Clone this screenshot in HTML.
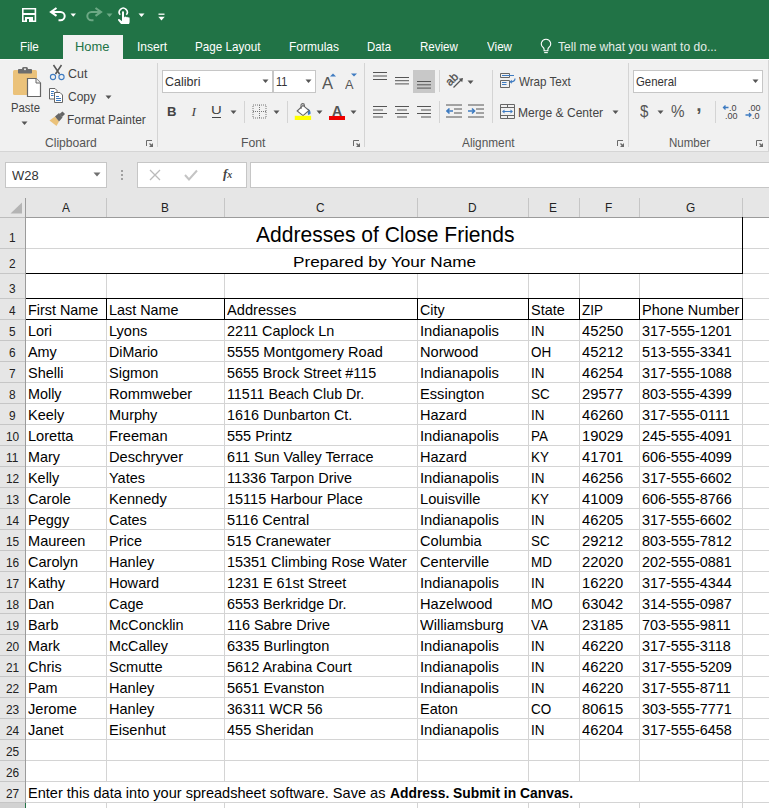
<!DOCTYPE html>
<html><head><meta charset="utf-8"><style>
html,body{margin:0;padding:0;}
body{width:769px;height:808px;overflow:hidden;position:relative;background:#fff;font-family:"Liberation Sans",sans-serif;}
.r{position:absolute;display:block;}
.t{position:absolute;white-space:nowrap;transform-origin:0 0;}
</style></head><body>
<div class="r" style="left:0px;top:0px;width:769px;height:59px;background:#217346;"></div>
<svg class="r" style="left:22px;top:8px" width="15" height="14" viewBox="0 0 15 14"><path d="M0.8 0.8h12.6v12.6h-12.6z" fill="none" stroke="#fff" stroke-width="1.6"/><rect x="0" y="5" width="14" height="2" fill="#fff"/><rect x="3" y="9" width="8" height="5" fill="#fff"/><rect x="5" y="11" width="2" height="3" fill="#217346"/></svg>
<svg class="r" style="left:46px;top:4px" width="64" height="22" viewBox="0 0 64 22"><path d="M10.5 4 L5 7.9 L10.5 11.8" fill="none" stroke="#fff" stroke-width="2.1"/><path d="M5.5 7.9 H14.5 A4.2 4.2 0 0 1 14.5 16.3 H12.5" fill="none" stroke="#fff" stroke-width="2"/><path d="M49.5 4 L55 7.9 L49.5 11.8" fill="none" stroke="#6da985" stroke-width="2.1"/><path d="M54.5 7.9 H45.5 A4.2 4.2 0 0 0 45.5 16.3 H47.5" fill="none" stroke="#6da985" stroke-width="2"/></svg>
<svg class="r" style="left:70px;top:13px" width="7" height="5" viewBox="0 0 7 5"><path d="M0.5 0.5h5.5l-2.75 3.2z" fill="#fff"/></svg>
<svg class="r" style="left:106px;top:13px" width="7" height="5" viewBox="0 0 7 5"><path d="M0.5 0.5h6l-3 3.5z" fill="#6da985"/></svg>
<svg class="r" style="left:116px;top:6px" width="15" height="18" viewBox="0 0 15 18"><path d="M4.2 8.8A4 4 0 1 1 10.3 8.8" fill="none" stroke="#fff" stroke-width="1.6"/><path d="M6 6.2c0-1.2 2-1.2 2 0v5.3l.3-.2c0-1 1.8-1 1.8 0v.3c0-1 1.8-1 1.8 0v.4c0-.9 1.7-.9 1.7 .2v3.5c0 1.4-.6 2.3-1.2 3.3h-6.6l-3.6-4.6c-.7-.9.4-1.9 1.3-1.2l2.5 2z" fill="#fff"/></svg>
<svg class="r" style="left:137.5px;top:13px" width="7" height="5" viewBox="0 0 7 5"><path d="M0.5 0.5h6l-3 3.5z" fill="#fff"/></svg>
<svg class="r" style="left:158px;top:13px" width="7" height="9" viewBox="0 0 7 9"><path d="M0.5 1.2h6" stroke="#fff" stroke-width="1.3"/><path d="M0.3 3.8h6.4l-3.2 3.6z" fill="#fff"/></svg>
<div class="r" style="left:63px;top:35px;width:60px;height:24px;background:#f1f1f1;"></div>
<div class="t" style="left:19.66px;top:39px;font-size:12.79px;line-height:15px;color:#fff;transform:scaleX(0.9161);">File</div>
<div class="t" style="left:75.27px;top:39px;font-size:12.79px;line-height:15px;color:#217346;transform:scaleX(1.0096);">Home</div>
<div class="t" style="left:136.91px;top:39px;font-size:12.79px;line-height:15px;color:#fff;transform:scaleX(0.9427);">Insert</div>
<div class="t" style="left:195.37px;top:39px;font-size:12.79px;line-height:15px;color:#fff;transform:scaleX(0.9119);">Page Layout</div>
<div class="t" style="left:289.34px;top:39px;font-size:12.79px;line-height:15px;color:#fff;transform:scaleX(0.9390);">Formulas</div>
<div class="t" style="left:367.39px;top:39px;font-size:12.79px;line-height:15px;color:#fff;transform:scaleX(0.8935);">Data</div>
<div class="t" style="left:420.07px;top:39px;font-size:12.79px;line-height:15px;color:#fff;transform:scaleX(0.9040);">Review</div>
<div class="t" style="left:486.94px;top:39px;font-size:12.79px;line-height:15px;color:#fff;transform:scaleX(0.9112);">View</div>
<svg class="r" style="left:540px;top:38px" width="12" height="17" viewBox="0 0 12 17"><path d="M6 1.2a4.6 4.6 0 0 0-2.8 8.3c.6.5.9 1.2.9 2v1.2h3.8v-1.2c0-.8.3-1.5.9-2A4.6 4.6 0 0 0 6 1.2z" fill="none" stroke="#fff" stroke-width="1.1"/><path d="M4.2 14.6h3.6" stroke="#fff" stroke-width="1.1"/></svg>
<div class="t" style="left:558.06px;top:39px;font-size:12.79px;line-height:15px;color:#e4ede8;transform:scaleX(0.9440);">Tell me what you want to do...</div>
<div class="r" style="left:0px;top:59px;width:769px;height:93px;background:#f1f1f1;"></div>
<div class="r" style="left:0px;top:59px;width:63px;height:1px;background:#fafafa;"></div>
<div class="r" style="left:123px;top:59px;width:646px;height:1px;background:#fafafa;"></div>
<div class="r" style="left:0px;top:151px;width:769px;height:1px;background:#d5d5d5;"></div>
<div class="r" style="left:768px;top:60px;width:1px;height:91px;background:#d5d5d5;"></div>
<div class="r" style="left:0px;top:152px;width:769px;height:46px;background:#e6e6e6;"></div>
<!--RIBBON-->
<div class="r" style="left:157px;top:63px;width:1px;height:84px;background:#d4d4d4;"></div>
<div class="r" style="left:364px;top:63px;width:1px;height:84px;background:#d4d4d4;"></div>
<div class="r" style="left:628px;top:63px;width:1px;height:84px;background:#d4d4d4;"></div>
<div class="t" style="left:44.89px;top:136px;font-size:12.06px;line-height:14px;color:#555;transform:scaleX(1.0050);">Clipboard</div>
<div class="t" style="left:240.52px;top:136px;font-size:12.06px;line-height:14px;color:#555;transform:scaleX(1.0172);">Font</div>
<div class="t" style="left:462.00px;top:136px;font-size:12.06px;line-height:14px;color:#555;transform:scaleX(0.9801);">Alignment</div>
<div class="t" style="left:669.08px;top:136px;font-size:12.06px;line-height:14px;color:#555;transform:scaleX(0.9583);">Number</div>
<svg class="r" style="left:146px;top:140px" width="8" height="7" viewBox="0 0 8 7"><path d="M0.5 6V0.5H6" fill="none" stroke="#6a6a6a" stroke-width="1"/><path d="M3.5 3.5l2 2" stroke="#6a6a6a" stroke-width="1.2"/><path d="M7 3V7H3z" fill="#6a6a6a"/></svg>
<svg class="r" style="left:353px;top:140px" width="8" height="7" viewBox="0 0 8 7"><path d="M0.5 6V0.5H6" fill="none" stroke="#6a6a6a" stroke-width="1"/><path d="M3.5 3.5l2 2" stroke="#6a6a6a" stroke-width="1.2"/><path d="M7 3V7H3z" fill="#6a6a6a"/></svg>
<svg class="r" style="left:617px;top:140px" width="8" height="7" viewBox="0 0 8 7"><path d="M0.5 6V0.5H6" fill="none" stroke="#6a6a6a" stroke-width="1"/><path d="M3.5 3.5l2 2" stroke="#6a6a6a" stroke-width="1.2"/><path d="M7 3V7H3z" fill="#6a6a6a"/></svg>
<svg class="r" style="left:756px;top:140px" width="8" height="7" viewBox="0 0 8 7"><path d="M0.5 6V0.5H6" fill="none" stroke="#6a6a6a" stroke-width="1"/><path d="M3.5 3.5l2 2" stroke="#6a6a6a" stroke-width="1.2"/><path d="M7 3V7H3z" fill="#6a6a6a"/></svg>
<svg class="r" style="left:12px;top:66px" width="30" height="32" viewBox="0 0 30 32"><rect x="1" y="4" width="24" height="25" rx="1.5" fill="#ebc27a"/><rect x="6" y="3" width="14" height="4.5" rx="0.8" fill="#6d6d6d"/><rect x="10" y="1" width="6" height="4" rx="1.5" fill="#6d6d6d"/><circle cx="13" cy="3.2" r="1" fill="#f1f1f1"/><path d="M15.5 12.5h8.5l4.5 4.5v13.5h-13z" fill="#fff" stroke="#666" stroke-width="1.2"/><path d="M24 12.5v4.5h4.5" fill="#f1f1f1" stroke="#666" stroke-width="1"/></svg>
<div class="t" style="left:10.59px;top:100px;font-size:12.79px;line-height:15px;color:#444;transform:scaleX(0.8848);">Paste</div>
<svg class="r" style="left:21px;top:121px" width="7" height="5" viewBox="0 0 7 5"><path d="M0.5 0.5h6l-3 3.5z" fill="#555"/></svg>
<svg class="r" style="left:49px;top:64px" width="17" height="17" viewBox="0 0 17 17"><path d="M4.5 1 L10.5 10 M12.5 1 L6.5 10" stroke="#555" stroke-width="1.5"/><circle cx="4" cy="13" r="2.6" fill="none" stroke="#3e7bc1" stroke-width="1.1"/><circle cx="12.5" cy="13" r="2.6" fill="none" stroke="#3e7bc1" stroke-width="1.1"/></svg>
<div class="t" style="left:67.68px;top:66px;font-size:12.79px;line-height:15px;color:#444;transform:scaleX(0.9747);">Cut</div>
<svg class="r" style="left:48px;top:88px" width="17" height="15" viewBox="0 0 17 15"><path d="M1.5 0.5h5.5l2 2v8.5h-7.5z" fill="#fff" stroke="#666" stroke-width="1"/><path d="M6.5 4.5h5.5l2.5 2.5v7.5h-8z" fill="#fff" stroke="#666" stroke-width="1"/><path d="M3 3.5h3M3 5.5h2.5M3 7.5h2.5M8 8.5h3M8 10.5h5M8 12.5h5" stroke="#3e7bc1" stroke-width="1"/></svg>
<div class="t" style="left:67.70px;top:89px;font-size:12.79px;line-height:15px;color:#444;transform:scaleX(0.9409);">Copy</div>
<svg class="r" style="left:105px;top:95px" width="7" height="5" viewBox="0 0 7 5"><path d="M0.5 0.5h6l-3 3.5z" fill="#555"/></svg>
<svg class="r" style="left:49px;top:111px" width="17" height="16" viewBox="0 0 17 16"><path d="M0.5 9.5 L6 5.5 L10 10.5 L7.5 15z" fill="#ebc27a"/><path d="M6 5.5 L10 2 L13.5 6.5 L10 10.5z" fill="#666"/><path d="M10.5 3 L13.5 0.5 L16 3 L13 6z" fill="#666"/></svg>
<div class="t" style="left:67.35px;top:112px;font-size:12.79px;line-height:15px;color:#444;transform:scaleX(0.9324);">Format Painter</div>
<div class="r" style="left:162px;top:70px;width:111px;height:23px;background:#fff;border:1px solid #c6c6c6;box-sizing:border-box;"></div>
<div class="r" style="left:273px;top:70px;width:43px;height:23px;background:#fff;border:1px solid #c6c6c6;box-sizing:border-box;"></div>
<div class="t" style="left:164.87px;top:74px;font-size:12.79px;line-height:15px;color:#333;transform:scaleX(0.9791);">Calibri</div>
<svg class="r" style="left:262px;top:79px" width="7" height="5" viewBox="0 0 7 5"><path d="M0.5 0.5h6l-3 3.5z" fill="#555"/></svg>
<div class="t" style="left:276.18px;top:74px;font-size:12.79px;line-height:15px;color:#333;transform:scaleX(0.8544);">11</div>
<svg class="r" style="left:305px;top:79px" width="7" height="5" viewBox="0 0 7 5"><path d="M0.5 0.5h6l-3 3.5z" fill="#555"/></svg>
<div class="t" style="left:322.00px;top:75px;font-size:15.99px;line-height:17px;color:#555;transform:scaleX(1.0346);">A</div>
<svg class="r" style="left:330px;top:73px" width="6" height="4" viewBox="0 0 6 4"><path d="M0 3.5l3-3 3 3z" fill="#3e7bc1"/></svg>
<div class="t" style="left:345.00px;top:78px;font-size:12.35px;line-height:14px;color:#555;transform:scaleX(1.0346);">A</div>
<svg class="r" style="left:351px;top:73px" width="6" height="4" viewBox="0 0 6 4"><path d="M0 0.5l3 3 3-3z" fill="#3e7bc1"/></svg>
<div class="t" style="left:167.15px;top:105px;font-size:12.35px;line-height:14px;color:#444;font-weight:bold;transform:scaleX(1.0615);">B</div>
<div class="t" style="left:191.5px;top:104px;font-family:'Liberation Serif',serif;font-style:italic;font-size:13.5px;line-height:15px;color:#444">I</div>
<div class="t" style="left:211.38px;top:103px;font-size:11.63px;line-height:13px;color:#444;transform:scaleX(1.2825);">U</div>
<div class="r" style="left:212px;top:117px;width:9px;height:1px;background:#444;"></div>
<svg class="r" style="left:230px;top:110px" width="7" height="5" viewBox="0 0 7 5"><path d="M0.5 0.5h6l-3 3.5z" fill="#555"/></svg>
<div class="r" style="left:244px;top:101px;width:1px;height:22px;background:#d4d4d4;"></div>
<svg class="r" style="left:252px;top:104px" width="15" height="15" viewBox="0 0 15 15"><path d="M1 1h13v13h-13z M7.5 1v13 M1 7.5h13" fill="none" stroke="#777" stroke-width="1" stroke-dasharray="1 1"/></svg>
<svg class="r" style="left:273px;top:110px" width="7" height="5" viewBox="0 0 7 5"><path d="M0.5 0.5h6l-3 3.5z" fill="#555"/></svg>
<div class="r" style="left:287px;top:101px;width:1px;height:22px;background:#d4d4d4;"></div>
<svg class="r" style="left:294px;top:101px" width="18" height="20" viewBox="0 0 18 20"><path d="M13.5 7.5c2 .8 3.5 2.8 3 5.5l-2.5 1z" fill="#3e7bc1"/><path d="M3.2 10 L9 4.4 L15 9.5 L9 14.6z" fill="#fff" stroke="#666" stroke-width="1.1"/><path d="M7 8V4.3a1.7 1.7 0 0 1 3.4 0V6" fill="none" stroke="#666" stroke-width="1.1"/><rect x="0.8" y="14.8" width="16.3" height="4.2" fill="#ffff00"/></svg>
<svg class="r" style="left:316px;top:110px" width="7" height="5" viewBox="0 0 7 5"><path d="M0.5 0.5h6l-3 3.5z" fill="#555"/></svg>
<div class="t" style="left:332.15px;top:103px;font-size:14.53px;line-height:16px;color:#555;font-weight:bold;transform:scaleX(0.9755);">A</div>
<div class="r" style="left:329px;top:116px;width:16px;height:4px;background:#e00;"></div>
<svg class="r" style="left:350px;top:110px" width="7" height="5" viewBox="0 0 7 5"><path d="M0.5 0.5h6l-3 3.5z" fill="#555"/></svg>
<svg class="r" style="left:373px;top:72px" width="16" height="11.5" viewBox="0 0 16 11.5"><rect x="0" y="0.0" width="14" height="1" fill="#555"/><rect x="0" y="3.5" width="14" height="1" fill="#555"/><rect x="0" y="7.0" width="14" height="1" fill="#555"/></svg>
<svg class="r" style="left:395px;top:77px" width="16" height="10.600000000000001" viewBox="0 0 16 10.600000000000001"><rect x="0" y="0.0" width="14" height="1" fill="#555"/><rect x="0" y="3.2" width="14" height="1" fill="#555"/><rect x="0" y="6.4" width="14" height="1" fill="#555"/></svg>
<div class="r" style="left:413px;top:70px;width:22px;height:23px;background:#c8c8c8;"></div>
<svg class="r" style="left:417px;top:81px" width="16" height="10.899999999999999" viewBox="0 0 16 10.899999999999999"><rect x="0" y="0.0" width="14" height="1" fill="#555"/><rect x="0" y="3.3" width="14" height="1" fill="#555"/><rect x="0" y="6.6" width="14" height="1" fill="#555"/></svg>
<svg class="r" style="left:444px;top:71px" width="22" height="20" viewBox="0 0 22 20"><text x="0" y="0" transform="translate(6,15.6) rotate(-45)" font-family="Liberation Sans" font-size="11.5" fill="#4a4a4a" stroke="#4a4a4a" stroke-width="0.3">ab</text><path d="M9.5 16.5 L17 9" stroke="#555" stroke-width="1.2"/><path d="M19 7 L14.8 7.8 L18.2 11.2z" fill="#555"/></svg>
<svg class="r" style="left:467px;top:80px" width="7" height="5" viewBox="0 0 7 5"><path d="M0.5 0.5h6l-3 3.5z" fill="#555"/></svg>
<div class="r" style="left:439px;top:70px;width:1px;height:22px;background:#d4d4d4;"></div>
<div class="r" style="left:439px;top:101px;width:1px;height:22px;background:#d4d4d4;"></div>
<svg class="r" style="left:373px;top:106px" width="16" height="15.0" viewBox="0 0 16 15.0"><rect x="0" y="0.0" width="14" height="1" fill="#555"/><rect x="0" y="3.5" width="10" height="1" fill="#555"/><rect x="0" y="7.0" width="14" height="1" fill="#555"/><rect x="0" y="10.5" width="10" height="1" fill="#555"/></svg>
<svg class="r" style="left:395px;top:106px" width="16" height="15.0" viewBox="0 0 16 15.0"><rect x="0" y="0.0" width="14" height="1" fill="#555"/><rect x="2" y="3.5" width="10" height="1" fill="#555"/><rect x="0" y="7.0" width="14" height="1" fill="#555"/><rect x="2" y="10.5" width="10" height="1" fill="#555"/></svg>
<svg class="r" style="left:417px;top:106px" width="16" height="15.0" viewBox="0 0 16 15.0"><rect x="0" y="0.0" width="14" height="1" fill="#555"/><rect x="4" y="3.5" width="10" height="1" fill="#555"/><rect x="0" y="7.0" width="14" height="1" fill="#555"/><rect x="4" y="10.5" width="10" height="1" fill="#555"/></svg>
<svg class="r" style="left:446px;top:104px" width="18" height="15" viewBox="0 0 18 15"><path d="M0 1h16M8 5h8M8 9h8M0 13h16" stroke="#555" stroke-width="1"/><path d="M1 7h6M3.5 4.5l-2.5 2.5 2.5 2.5" fill="none" stroke="#3e7bc1" stroke-width="1.6"/></svg>
<svg class="r" style="left:468px;top:104px" width="18" height="15" viewBox="0 0 18 15"><path d="M0 1h16M8 5h8M8 9h8M0 13h16" stroke="#555" stroke-width="1"/><path d="M0 7h6M4 4.5l2.5 2.5-2.5 2.5" fill="none" stroke="#3e7bc1" stroke-width="1.6"/></svg>
<div class="r" style="left:492px;top:70px;width:1px;height:53px;background:#d4d4d4;"></div>
<svg class="r" style="left:499px;top:72px" width="18" height="17" viewBox="0 0 18 17"><path d="M1.5 1.5h9v4h-9z M1.5 8.5h9v7h-9z" fill="none" stroke="#666" stroke-width="1"/><path d="M3 3.5h12 M3 10.5h4.5 M3 12.5h4.5" stroke="#3e7bc1" stroke-width="1"/><path d="M16 6.5c0 2-1.5 3.3-4.5 3.3" fill="none" stroke="#3e7bc1" stroke-width="1.2"/><path d="M10.5 9.8l2.3-2v4z" fill="#3e7bc1"/></svg>
<div class="t" style="left:519.24px;top:74px;font-size:12.79px;line-height:15px;color:#444;transform:scaleX(0.9083);">Wrap Text</div>
<svg class="r" style="left:499px;top:104px" width="17" height="16" viewBox="0 0 17 16"><path d="M1.5 0.5h14v14h-14z M1.5 3.5h14 M1.5 11.5h14 M8.5 0.5v3 M8.5 11.5v3" fill="none" stroke="#666" stroke-width="1"/><path d="M4.5 7.5h8" stroke="#3e7bc1" stroke-width="1"/><path d="M3 7.5l2.5-2v4z M14 7.5l-2.5-2v4z" fill="#3e7bc1"/></svg>
<div class="t" style="left:518.33px;top:105px;font-size:12.79px;line-height:15px;color:#444;transform:scaleX(0.9436);">Merge &amp; Center</div>
<svg class="r" style="left:612px;top:110px" width="7" height="5" viewBox="0 0 7 5"><path d="M0.5 0.5h6l-3 3.5z" fill="#555"/></svg>
<div class="r" style="left:633px;top:70px;width:130px;height:23px;background:#fff;border:1px solid #c6c6c6;box-sizing:border-box;"></div>
<div class="t" style="left:635.73px;top:74px;font-size:12.79px;line-height:15px;color:#333;transform:scaleX(0.8909);">General</div>
<svg class="r" style="left:752px;top:79px" width="7" height="5" viewBox="0 0 7 5"><path d="M0.5 0.5h6l-3 3.5z" fill="#555"/></svg>
<div class="t" style="left:640.35px;top:103px;font-size:15.99px;line-height:17px;color:#555;transform:scaleX(0.9441);">$</div>
<svg class="r" style="left:657px;top:110px" width="7" height="5" viewBox="0 0 7 5"><path d="M0.5 0.5h6l-3 3.5z" fill="#555"/></svg>
<div class="t" style="left:671.47px;top:103px;font-size:15.99px;line-height:17px;color:#555;transform:scaleX(0.9534);">%</div>
<div class="t" style="left:696.17px;top:94px;font-size:19.00px;line-height:21px;color:#555;font-weight:bold;">,</div>
<div class="r" style="left:715px;top:101px;width:1px;height:22px;background:#d4d4d4;"></div>
<svg class="r" style="left:722px;top:103px" width="17" height="17" viewBox="0 0 17 17"><text x="7" y="8" font-family="Liberation Sans" font-size="9" fill="#444">.0</text><text x="3" y="15.5" font-family="Liberation Sans" font-size="9" fill="#444">.00</text><path d="M1.5 4.5h5M3.5 2.5l-2 2 2 2" fill="none" stroke="#3e7bc1" stroke-width="1.3"/></svg>
<svg class="r" style="left:745px;top:103px" width="17" height="17" viewBox="0 0 17 17"><text x="3" y="8" font-family="Liberation Sans" font-size="9" fill="#444">.00</text><text x="7" y="15.5" font-family="Liberation Sans" font-size="9" fill="#444">.0</text><path d="M0.5 12h5.5M4 10l2 2-2 2" fill="none" stroke="#3e7bc1" stroke-width="1.3"/></svg>
<div class="r" style="left:5px;top:162px;width:102px;height:26px;background:#fff;border:1px solid #c6c6c6;box-sizing:border-box;"></div>
<div class="t" style="left:12.24px;top:168px;font-size:12.79px;line-height:15px;color:#333;transform:scaleX(1.0113);">W28</div>
<svg class="r" style="left:93px;top:172px" width="8" height="5" viewBox="0 0 8 5"><path d="M0.5 0.5h7l-3.5 4z" fill="#707070"/></svg>
<div class="r" style="left:121px;top:170px;width:2px;height:2px;background:#a0a0a0;"></div>
<div class="r" style="left:121px;top:174px;width:2px;height:2px;background:#a0a0a0;"></div>
<div class="r" style="left:121px;top:178px;width:2px;height:2px;background:#a0a0a0;"></div>
<div class="r" style="left:137px;top:162px;width:110px;height:26px;background:#fff;border:1px solid #c6c6c6;box-sizing:border-box;"></div>
<svg class="r" style="left:149px;top:169px" width="12" height="12" viewBox="0 0 12 12"><path d="M1 1l10 10M11 1L1 11" stroke="#bbb" stroke-width="1.3"/></svg>
<svg class="r" style="left:184px;top:169px" width="14" height="12" viewBox="0 0 14 12"><path d="M1 6l4 4.5 8-9" fill="none" stroke="#c4c4c4" stroke-width="2"/></svg>
<div class="t" style="left:223px;top:166px;font-family:'Liberation Serif',serif;font-style:italic;font-weight:bold;font-size:13px;line-height:16px;color:#444">f<span style="font-size:10px">x</span></div>
<div class="r" style="left:250px;top:162px;width:530px;height:26px;background:#fff;border:1px solid #c6c6c6;box-sizing:border-box;"></div>
<div class="r" style="left:0px;top:198px;width:769px;height:610px;background:#fff;"></div>
<div class="r" style="left:0px;top:198px;width:769px;height:19px;background:#e6e6e6;"></div>
<div class="r" style="left:0px;top:198px;width:25px;height:610px;background:#e6e6e6;"></div>
<svg class="r" style="left:10px;top:202px" width="13" height="12" viewBox="0 0 13 12"><path d="M12 0.5V11.5H0.5z" fill="#b4b4b4"/></svg>
<div class="r" style="left:106px;top:198px;width:1px;height:19px;background:#c6c6c6;"></div>
<div class="r" style="left:224px;top:198px;width:1px;height:19px;background:#c6c6c6;"></div>
<div class="r" style="left:417px;top:198px;width:1px;height:19px;background:#c6c6c6;"></div>
<div class="r" style="left:528px;top:198px;width:1px;height:19px;background:#c6c6c6;"></div>
<div class="r" style="left:579px;top:198px;width:1px;height:19px;background:#c6c6c6;"></div>
<div class="r" style="left:639px;top:198px;width:1px;height:19px;background:#c6c6c6;"></div>
<div class="r" style="left:742px;top:198px;width:1px;height:19px;background:#c6c6c6;"></div>
<div class="r" style="left:0px;top:217px;width:25px;height:1px;background:#bdbdbd;"></div>
<div class="r" style="left:25px;top:217px;width:744px;height:1px;background:#9b9b9b;"></div>
<div class="r" style="left:25px;top:198px;width:1px;height:610px;background:#9b9b9b;"></div>
<div class="t" style="left:62.00px;top:201px;font-size:12.50px;line-height:14px;color:#222;transform:scaleX(0.9500);">A</div>
<div class="t" style="left:160.55px;top:201px;font-size:12.50px;line-height:14px;color:#222;transform:scaleX(0.9500);">B</div>
<div class="t" style="left:316.41px;top:201px;font-size:12.50px;line-height:14px;color:#222;transform:scaleX(0.9500);">C</div>
<div class="t" style="left:468.05px;top:201px;font-size:12.50px;line-height:14px;color:#222;transform:scaleX(0.9500);">D</div>
<div class="t" style="left:549.05px;top:201px;font-size:12.50px;line-height:14px;color:#222;transform:scaleX(0.9500);">E</div>
<div class="t" style="left:604.55px;top:201px;font-size:12.50px;line-height:14px;color:#222;transform:scaleX(0.9500);">F</div>
<div class="t" style="left:686.41px;top:201px;font-size:12.50px;line-height:14px;color:#222;transform:scaleX(0.9500);">G</div>
<div class="r" style="left:0px;top:248px;width:25px;height:1px;background:#c6c6c6;"></div>
<div class="r" style="left:0px;top:273px;width:25px;height:1px;background:#c6c6c6;"></div>
<div class="r" style="left:0px;top:298px;width:25px;height:1px;background:#c6c6c6;"></div>
<div class="r" style="left:0px;top:319px;width:25px;height:1px;background:#c6c6c6;"></div>
<div class="r" style="left:0px;top:340px;width:25px;height:1px;background:#c6c6c6;"></div>
<div class="r" style="left:0px;top:361px;width:25px;height:1px;background:#c6c6c6;"></div>
<div class="r" style="left:0px;top:382px;width:25px;height:1px;background:#c6c6c6;"></div>
<div class="r" style="left:0px;top:403px;width:25px;height:1px;background:#c6c6c6;"></div>
<div class="r" style="left:0px;top:424px;width:25px;height:1px;background:#c6c6c6;"></div>
<div class="r" style="left:0px;top:445px;width:25px;height:1px;background:#c6c6c6;"></div>
<div class="r" style="left:0px;top:466px;width:25px;height:1px;background:#c6c6c6;"></div>
<div class="r" style="left:0px;top:487px;width:25px;height:1px;background:#c6c6c6;"></div>
<div class="r" style="left:0px;top:508px;width:25px;height:1px;background:#c6c6c6;"></div>
<div class="r" style="left:0px;top:529px;width:25px;height:1px;background:#c6c6c6;"></div>
<div class="r" style="left:0px;top:550px;width:25px;height:1px;background:#c6c6c6;"></div>
<div class="r" style="left:0px;top:571px;width:25px;height:1px;background:#c6c6c6;"></div>
<div class="r" style="left:0px;top:592px;width:25px;height:1px;background:#c6c6c6;"></div>
<div class="r" style="left:0px;top:613px;width:25px;height:1px;background:#c6c6c6;"></div>
<div class="r" style="left:0px;top:634px;width:25px;height:1px;background:#c6c6c6;"></div>
<div class="r" style="left:0px;top:655px;width:25px;height:1px;background:#c6c6c6;"></div>
<div class="r" style="left:0px;top:676px;width:25px;height:1px;background:#c6c6c6;"></div>
<div class="r" style="left:0px;top:697px;width:25px;height:1px;background:#c6c6c6;"></div>
<div class="r" style="left:0px;top:718px;width:25px;height:1px;background:#c6c6c6;"></div>
<div class="r" style="left:0px;top:739px;width:25px;height:1px;background:#c6c6c6;"></div>
<div class="r" style="left:0px;top:760px;width:25px;height:1px;background:#c6c6c6;"></div>
<div class="r" style="left:0px;top:781px;width:25px;height:1px;background:#c6c6c6;"></div>
<div class="r" style="left:0px;top:802px;width:25px;height:1px;background:#c6c6c6;"></div>
<div class="r" style="left:26px;top:248px;width:743px;height:1px;background:#d4d4d4;"></div>
<div class="r" style="left:26px;top:273px;width:743px;height:1px;background:#d4d4d4;"></div>
<div class="r" style="left:26px;top:298px;width:743px;height:1px;background:#d4d4d4;"></div>
<div class="r" style="left:26px;top:319px;width:743px;height:1px;background:#d4d4d4;"></div>
<div class="r" style="left:26px;top:340px;width:743px;height:1px;background:#d4d4d4;"></div>
<div class="r" style="left:26px;top:361px;width:743px;height:1px;background:#d4d4d4;"></div>
<div class="r" style="left:26px;top:382px;width:743px;height:1px;background:#d4d4d4;"></div>
<div class="r" style="left:26px;top:403px;width:743px;height:1px;background:#d4d4d4;"></div>
<div class="r" style="left:26px;top:424px;width:743px;height:1px;background:#d4d4d4;"></div>
<div class="r" style="left:26px;top:445px;width:743px;height:1px;background:#d4d4d4;"></div>
<div class="r" style="left:26px;top:466px;width:743px;height:1px;background:#d4d4d4;"></div>
<div class="r" style="left:26px;top:487px;width:743px;height:1px;background:#d4d4d4;"></div>
<div class="r" style="left:26px;top:508px;width:743px;height:1px;background:#d4d4d4;"></div>
<div class="r" style="left:26px;top:529px;width:743px;height:1px;background:#d4d4d4;"></div>
<div class="r" style="left:26px;top:550px;width:743px;height:1px;background:#d4d4d4;"></div>
<div class="r" style="left:26px;top:571px;width:743px;height:1px;background:#d4d4d4;"></div>
<div class="r" style="left:26px;top:592px;width:743px;height:1px;background:#d4d4d4;"></div>
<div class="r" style="left:26px;top:613px;width:743px;height:1px;background:#d4d4d4;"></div>
<div class="r" style="left:26px;top:634px;width:743px;height:1px;background:#d4d4d4;"></div>
<div class="r" style="left:26px;top:655px;width:743px;height:1px;background:#d4d4d4;"></div>
<div class="r" style="left:26px;top:676px;width:743px;height:1px;background:#d4d4d4;"></div>
<div class="r" style="left:26px;top:697px;width:743px;height:1px;background:#d4d4d4;"></div>
<div class="r" style="left:26px;top:718px;width:743px;height:1px;background:#d4d4d4;"></div>
<div class="r" style="left:26px;top:739px;width:743px;height:1px;background:#d4d4d4;"></div>
<div class="r" style="left:26px;top:760px;width:743px;height:1px;background:#d4d4d4;"></div>
<div class="r" style="left:26px;top:781px;width:743px;height:1px;background:#d4d4d4;"></div>
<div class="r" style="left:26px;top:802px;width:743px;height:1px;background:#d4d4d4;"></div>
<div class="r" style="left:742px;top:217px;width:1px;height:591px;background:#d4d4d4;"></div>
<div class="r" style="left:106px;top:273px;width:1px;height:508px;background:#d4d4d4;"></div>
<div class="r" style="left:106px;top:802px;width:1px;height:6px;background:#d4d4d4;"></div>
<div class="r" style="left:224px;top:273px;width:1px;height:508px;background:#d4d4d4;"></div>
<div class="r" style="left:224px;top:802px;width:1px;height:6px;background:#d4d4d4;"></div>
<div class="r" style="left:417px;top:273px;width:1px;height:508px;background:#d4d4d4;"></div>
<div class="r" style="left:417px;top:802px;width:1px;height:6px;background:#d4d4d4;"></div>
<div class="r" style="left:528px;top:273px;width:1px;height:508px;background:#d4d4d4;"></div>
<div class="r" style="left:528px;top:802px;width:1px;height:6px;background:#d4d4d4;"></div>
<div class="r" style="left:579px;top:273px;width:1px;height:508px;background:#d4d4d4;"></div>
<div class="r" style="left:579px;top:802px;width:1px;height:6px;background:#d4d4d4;"></div>
<div class="r" style="left:639px;top:273px;width:1px;height:508px;background:#d4d4d4;"></div>
<div class="r" style="left:639px;top:802px;width:1px;height:6px;background:#d4d4d4;"></div>
<div class="r" style="left:26px;top:273px;width:717px;height:1px;background:#000;"></div>
<div class="r" style="left:742px;top:217px;width:1px;height:57px;background:#000;"></div>
<div class="r" style="left:26px;top:298px;width:717px;height:1px;background:#000;"></div>
<div class="r" style="left:26px;top:319px;width:717px;height:1px;background:#000;"></div>
<div class="r" style="left:106px;top:298px;width:1px;height:22px;background:#000;"></div>
<div class="r" style="left:224px;top:298px;width:1px;height:22px;background:#000;"></div>
<div class="r" style="left:417px;top:298px;width:1px;height:22px;background:#000;"></div>
<div class="r" style="left:528px;top:298px;width:1px;height:22px;background:#000;"></div>
<div class="r" style="left:579px;top:298px;width:1px;height:22px;background:#000;"></div>
<div class="r" style="left:639px;top:298px;width:1px;height:22px;background:#000;"></div>
<div class="r" style="left:742px;top:298px;width:1px;height:22px;background:#000;"></div>
<div class="r" style="left:0px;top:803px;width:25px;height:5px;background:#d2d2d2;"></div>
<div class="r" style="left:25px;top:803px;width:1px;height:5px;background:#217346;"></div>
<div class="t" style="left:9.03px;top:231px;font-size:12.50px;line-height:14px;color:#222;transform:scaleX(0.9500);">1</div>
<div class="t" style="left:9.20px;top:257px;font-size:12.50px;line-height:14px;color:#222;transform:scaleX(0.9500);">2</div>
<div class="t" style="left:9.20px;top:282px;font-size:12.50px;line-height:14px;color:#222;transform:scaleX(0.9500);">3</div>
<div class="t" style="left:9.26px;top:304px;font-size:12.50px;line-height:14px;color:#222;transform:scaleX(0.9500);">4</div>
<div class="t" style="left:9.20px;top:325px;font-size:12.50px;line-height:14px;color:#222;transform:scaleX(0.9500);">5</div>
<div class="t" style="left:9.15px;top:346px;font-size:12.50px;line-height:14px;color:#222;transform:scaleX(0.9500);">6</div>
<div class="t" style="left:9.20px;top:367px;font-size:12.50px;line-height:14px;color:#222;transform:scaleX(0.9500);">7</div>
<div class="t" style="left:9.17px;top:388px;font-size:12.50px;line-height:14px;color:#222;transform:scaleX(0.9500);">8</div>
<div class="t" style="left:9.20px;top:409px;font-size:12.50px;line-height:14px;color:#222;transform:scaleX(0.9500);">9</div>
<div class="t" style="left:5.67px;top:430px;font-size:12.50px;line-height:14px;color:#222;transform:scaleX(0.9500);">10</div>
<div class="t" style="left:6.18px;top:451px;font-size:12.50px;line-height:14px;color:#222;transform:scaleX(0.9500);">11</div>
<div class="t" style="left:5.76px;top:472px;font-size:12.50px;line-height:14px;color:#222;transform:scaleX(0.9500);">12</div>
<div class="t" style="left:5.70px;top:493px;font-size:12.50px;line-height:14px;color:#222;transform:scaleX(0.9500);">13</div>
<div class="t" style="left:5.64px;top:514px;font-size:12.50px;line-height:14px;color:#222;transform:scaleX(0.9500);">14</div>
<div class="t" style="left:5.70px;top:535px;font-size:12.50px;line-height:14px;color:#222;transform:scaleX(0.9500);">15</div>
<div class="t" style="left:5.70px;top:556px;font-size:12.50px;line-height:14px;color:#222;transform:scaleX(0.9500);">16</div>
<div class="t" style="left:5.76px;top:577px;font-size:12.50px;line-height:14px;color:#222;transform:scaleX(0.9500);">17</div>
<div class="t" style="left:5.70px;top:598px;font-size:12.50px;line-height:14px;color:#222;transform:scaleX(0.9500);">18</div>
<div class="t" style="left:5.73px;top:619px;font-size:12.50px;line-height:14px;color:#222;transform:scaleX(0.9500);">19</div>
<div class="t" style="left:5.82px;top:640px;font-size:12.50px;line-height:14px;color:#222;transform:scaleX(0.9500);">20</div>
<div class="t" style="left:5.88px;top:661px;font-size:12.50px;line-height:14px;color:#222;transform:scaleX(0.9500);">21</div>
<div class="t" style="left:5.91px;top:682px;font-size:12.50px;line-height:14px;color:#222;transform:scaleX(0.9500);">22</div>
<div class="t" style="left:5.85px;top:703px;font-size:12.50px;line-height:14px;color:#222;transform:scaleX(0.9500);">23</div>
<div class="t" style="left:5.79px;top:724px;font-size:12.50px;line-height:14px;color:#222;transform:scaleX(0.9500);">24</div>
<div class="t" style="left:5.85px;top:745px;font-size:12.50px;line-height:14px;color:#222;transform:scaleX(0.9500);">25</div>
<div class="t" style="left:5.85px;top:766px;font-size:12.50px;line-height:14px;color:#222;transform:scaleX(0.9500);">26</div>
<div class="t" style="left:5.91px;top:787px;font-size:12.50px;line-height:14px;color:#222;transform:scaleX(0.9500);">27</div>
<!--CELLS-->
<div class="t" style="left:255.60px;top:223px;font-size:21.22px;line-height:23px;color:#000;transform:scaleX(0.9917);">Addresses of Close Friends</div>
<div class="t" style="left:293.03px;top:253px;font-size:15.41px;line-height:17px;color:#000;transform:scaleX(1.1135);">Prepared by Your Name</div>
<div class="t" style="left:28.00px;top:302px;font-size:14.40px;line-height:16px;color:#000;transform:scaleX(0.9970);">First Name</div>
<div class="t" style="left:109.00px;top:302px;font-size:14.40px;line-height:16px;color:#000;transform:scaleX(0.9977);">Last Name</div>
<div class="t" style="left:227.00px;top:302px;font-size:14.40px;line-height:16px;color:#000;transform:scaleX(1.0184);">Addresses</div>
<div class="t" style="left:420.00px;top:302px;font-size:14.40px;line-height:16px;color:#000;transform:scaleX(0.9917);">City</div>
<div class="t" style="left:531.00px;top:302px;font-size:14.40px;line-height:16px;color:#000;transform:scaleX(1.0046);">State</div>
<div class="t" style="left:582.00px;top:302px;font-size:14.40px;line-height:16px;color:#000;transform:scaleX(0.9360);">ZIP</div>
<div class="t" style="left:642.00px;top:302px;font-size:14.40px;line-height:16px;color:#000;transform:scaleX(1.0058);">Phone Number</div>
<div class="t" style="left:28.00px;top:323px;font-size:14.40px;line-height:16px;color:#000;">Lori</div>
<div class="t" style="left:109.00px;top:323px;font-size:14.40px;line-height:16px;color:#000;transform:scaleX(1.0120);">Lyons</div>
<div class="t" style="left:227.00px;top:323px;font-size:14.40px;line-height:16px;color:#000;transform:scaleX(1.0027);">2211 Caplock Ln</div>
<div class="t" style="left:420.00px;top:323px;font-size:14.40px;line-height:16px;color:#000;transform:scaleX(1.0270);">Indianapolis</div>
<div class="t" style="left:531.00px;top:323px;font-size:14.40px;line-height:16px;color:#000;transform:scaleX(0.9360);">IN</div>
<div class="t" style="left:582.00px;top:323px;font-size:14.40px;line-height:16px;color:#000;transform:scaleX(1.0270);">45250</div>
<div class="t" style="left:642.00px;top:323px;font-size:14.40px;line-height:16px;color:#000;transform:scaleX(1.0021);">317-555-1201</div>
<div class="t" style="left:28.00px;top:344px;font-size:14.40px;line-height:16px;color:#000;">Amy</div>
<div class="t" style="left:109.00px;top:344px;font-size:14.40px;line-height:16px;color:#000;transform:scaleX(0.9887);">DiMario</div>
<div class="t" style="left:227.00px;top:344px;font-size:14.40px;line-height:16px;color:#000;transform:scaleX(1.0090);">5555 Montgomery Road</div>
<div class="t" style="left:420.00px;top:344px;font-size:14.40px;line-height:16px;color:#000;transform:scaleX(1.0147);">Norwood</div>
<div class="t" style="left:531.00px;top:344px;font-size:14.40px;line-height:16px;color:#000;transform:scaleX(0.9360);">OH</div>
<div class="t" style="left:582.00px;top:344px;font-size:14.40px;line-height:16px;color:#000;transform:scaleX(1.0270);">45212</div>
<div class="t" style="left:642.00px;top:344px;font-size:14.40px;line-height:16px;color:#000;transform:scaleX(1.0021);">513-555-3341</div>
<div class="t" style="left:28.00px;top:365px;font-size:14.40px;line-height:16px;color:#000;transform:scaleX(1.0058);">Shelli</div>
<div class="t" style="left:109.00px;top:365px;font-size:14.40px;line-height:16px;color:#000;transform:scaleX(1.0131);">Sigmon</div>
<div class="t" style="left:227.00px;top:365px;font-size:14.40px;line-height:16px;color:#000;transform:scaleX(0.9931);">5655 Brock Street #115</div>
<div class="t" style="left:420.00px;top:365px;font-size:14.40px;line-height:16px;color:#000;transform:scaleX(1.0270);">Indianapolis</div>
<div class="t" style="left:531.00px;top:365px;font-size:14.40px;line-height:16px;color:#000;transform:scaleX(0.9360);">IN</div>
<div class="t" style="left:582.00px;top:365px;font-size:14.40px;line-height:16px;color:#000;transform:scaleX(1.0270);">46254</div>
<div class="t" style="left:642.00px;top:365px;font-size:14.40px;line-height:16px;color:#000;transform:scaleX(1.0021);">317-555-1088</div>
<div class="t" style="left:28.00px;top:386px;font-size:14.40px;line-height:16px;color:#000;transform:scaleX(0.9977);">Molly</div>
<div class="t" style="left:109.00px;top:386px;font-size:14.40px;line-height:16px;color:#000;transform:scaleX(1.0198);">Rommweber</div>
<div class="t" style="left:227.00px;top:386px;font-size:14.40px;line-height:16px;color:#000;transform:scaleX(0.9901);">11511 Beach Club Dr.</div>
<div class="t" style="left:420.00px;top:386px;font-size:14.40px;line-height:16px;color:#000;transform:scaleX(1.0174);">Essington</div>
<div class="t" style="left:531.00px;top:386px;font-size:14.40px;line-height:16px;color:#000;transform:scaleX(0.9360);">SC</div>
<div class="t" style="left:582.00px;top:386px;font-size:14.40px;line-height:16px;color:#000;transform:scaleX(1.0270);">29577</div>
<div class="t" style="left:642.00px;top:386px;font-size:14.40px;line-height:16px;color:#000;transform:scaleX(1.0021);">803-555-4399</div>
<div class="t" style="left:28.00px;top:407px;font-size:14.40px;line-height:16px;color:#000;transform:scaleX(1.0064);">Keely</div>
<div class="t" style="left:109.00px;top:407px;font-size:14.40px;line-height:16px;color:#000;transform:scaleX(1.0080);">Murphy</div>
<div class="t" style="left:227.00px;top:407px;font-size:14.40px;line-height:16px;color:#000;transform:scaleX(0.9974);">1616 Dunbarton Ct.</div>
<div class="t" style="left:420.00px;top:407px;font-size:14.40px;line-height:16px;color:#000;transform:scaleX(1.0105);">Hazard</div>
<div class="t" style="left:531.00px;top:407px;font-size:14.40px;line-height:16px;color:#000;transform:scaleX(0.9360);">IN</div>
<div class="t" style="left:582.00px;top:407px;font-size:14.40px;line-height:16px;color:#000;transform:scaleX(1.0270);">46260</div>
<div class="t" style="left:642.00px;top:407px;font-size:14.40px;line-height:16px;color:#000;transform:scaleX(1.0021);">317-555-0111</div>
<div class="t" style="left:28.00px;top:428px;font-size:14.40px;line-height:16px;color:#000;transform:scaleX(1.0149);">Loretta</div>
<div class="t" style="left:109.00px;top:428px;font-size:14.40px;line-height:16px;color:#000;transform:scaleX(1.0173);">Freeman</div>
<div class="t" style="left:227.00px;top:428px;font-size:14.40px;line-height:16px;color:#000;transform:scaleX(1.0064);">555 Printz</div>
<div class="t" style="left:420.00px;top:428px;font-size:14.40px;line-height:16px;color:#000;transform:scaleX(1.0270);">Indianapolis</div>
<div class="t" style="left:531.00px;top:428px;font-size:14.40px;line-height:16px;color:#000;transform:scaleX(0.9360);">PA</div>
<div class="t" style="left:582.00px;top:428px;font-size:14.40px;line-height:16px;color:#000;transform:scaleX(1.0270);">19029</div>
<div class="t" style="left:642.00px;top:428px;font-size:14.40px;line-height:16px;color:#000;transform:scaleX(1.0021);">245-555-4091</div>
<div class="t" style="left:28.00px;top:449px;font-size:14.40px;line-height:16px;color:#000;transform:scaleX(0.9960);">Mary</div>
<div class="t" style="left:109.00px;top:449px;font-size:14.40px;line-height:16px;color:#000;transform:scaleX(1.0183);">Deschryver</div>
<div class="t" style="left:227.00px;top:449px;font-size:14.40px;line-height:16px;color:#000;">611 Sun Valley Terrace</div>
<div class="t" style="left:420.00px;top:449px;font-size:14.40px;line-height:16px;color:#000;transform:scaleX(1.0105);">Hazard</div>
<div class="t" style="left:531.00px;top:449px;font-size:14.40px;line-height:16px;color:#000;transform:scaleX(0.9360);">KY</div>
<div class="t" style="left:582.00px;top:449px;font-size:14.40px;line-height:16px;color:#000;transform:scaleX(1.0270);">41701</div>
<div class="t" style="left:642.00px;top:449px;font-size:14.40px;line-height:16px;color:#000;transform:scaleX(1.0021);">606-555-4099</div>
<div class="t" style="left:28.00px;top:470px;font-size:14.40px;line-height:16px;color:#000;transform:scaleX(1.0025);">Kelly</div>
<div class="t" style="left:109.00px;top:470px;font-size:14.40px;line-height:16px;color:#000;transform:scaleX(1.0070);">Yates</div>
<div class="t" style="left:227.00px;top:470px;font-size:14.40px;line-height:16px;color:#000;transform:scaleX(1.0062);">11336 Tarpon Drive</div>
<div class="t" style="left:420.00px;top:470px;font-size:14.40px;line-height:16px;color:#000;transform:scaleX(1.0270);">Indianapolis</div>
<div class="t" style="left:531.00px;top:470px;font-size:14.40px;line-height:16px;color:#000;transform:scaleX(0.9360);">IN</div>
<div class="t" style="left:582.00px;top:470px;font-size:14.40px;line-height:16px;color:#000;transform:scaleX(1.0270);">46256</div>
<div class="t" style="left:642.00px;top:470px;font-size:14.40px;line-height:16px;color:#000;transform:scaleX(1.0021);">317-555-6602</div>
<div class="t" style="left:28.00px;top:491px;font-size:14.40px;line-height:16px;color:#000;transform:scaleX(1.0085);">Carole</div>
<div class="t" style="left:109.00px;top:491px;font-size:14.40px;line-height:16px;color:#000;transform:scaleX(1.0158);">Kennedy</div>
<div class="t" style="left:227.00px;top:491px;font-size:14.40px;line-height:16px;color:#000;transform:scaleX(1.0073);">15115 Harbour Place</div>
<div class="t" style="left:420.00px;top:491px;font-size:14.40px;line-height:16px;color:#000;transform:scaleX(1.0190);">Louisville</div>
<div class="t" style="left:531.00px;top:491px;font-size:14.40px;line-height:16px;color:#000;transform:scaleX(0.9360);">KY</div>
<div class="t" style="left:582.00px;top:491px;font-size:14.40px;line-height:16px;color:#000;transform:scaleX(1.0270);">41009</div>
<div class="t" style="left:642.00px;top:491px;font-size:14.40px;line-height:16px;color:#000;transform:scaleX(1.0021);">606-555-8766</div>
<div class="t" style="left:28.00px;top:512px;font-size:14.40px;line-height:16px;color:#000;transform:scaleX(1.0094);">Peggy</div>
<div class="t" style="left:109.00px;top:512px;font-size:14.40px;line-height:16px;color:#000;transform:scaleX(1.0055);">Cates</div>
<div class="t" style="left:227.00px;top:512px;font-size:14.40px;line-height:16px;color:#000;transform:scaleX(1.0104);">5116 Central</div>
<div class="t" style="left:420.00px;top:512px;font-size:14.40px;line-height:16px;color:#000;transform:scaleX(1.0270);">Indianapolis</div>
<div class="t" style="left:531.00px;top:512px;font-size:14.40px;line-height:16px;color:#000;transform:scaleX(0.9360);">IN</div>
<div class="t" style="left:582.00px;top:512px;font-size:14.40px;line-height:16px;color:#000;transform:scaleX(1.0270);">46205</div>
<div class="t" style="left:642.00px;top:512px;font-size:14.40px;line-height:16px;color:#000;transform:scaleX(1.0021);">317-555-6602</div>
<div class="t" style="left:28.00px;top:533px;font-size:14.40px;line-height:16px;color:#000;transform:scaleX(1.0117);">Maureen</div>
<div class="t" style="left:109.00px;top:533px;font-size:14.40px;line-height:16px;color:#000;transform:scaleX(1.0039);">Price</div>
<div class="t" style="left:227.00px;top:533px;font-size:14.40px;line-height:16px;color:#000;transform:scaleX(1.0150);">515 Cranewater</div>
<div class="t" style="left:420.00px;top:533px;font-size:14.40px;line-height:16px;color:#000;transform:scaleX(1.0156);">Columbia</div>
<div class="t" style="left:531.00px;top:533px;font-size:14.40px;line-height:16px;color:#000;transform:scaleX(0.9360);">SC</div>
<div class="t" style="left:582.00px;top:533px;font-size:14.40px;line-height:16px;color:#000;transform:scaleX(1.0270);">29212</div>
<div class="t" style="left:642.00px;top:533px;font-size:14.40px;line-height:16px;color:#000;transform:scaleX(1.0021);">803-555-7812</div>
<div class="t" style="left:28.00px;top:554px;font-size:14.40px;line-height:16px;color:#000;transform:scaleX(1.0119);">Carolyn</div>
<div class="t" style="left:109.00px;top:554px;font-size:14.40px;line-height:16px;color:#000;transform:scaleX(1.0097);">Hanley</div>
<div class="t" style="left:227.00px;top:554px;font-size:14.40px;line-height:16px;color:#000;transform:scaleX(1.0022);">15351 Climbing Rose Water</div>
<div class="t" style="left:420.00px;top:554px;font-size:14.40px;line-height:16px;color:#000;transform:scaleX(1.0173);">Centerville</div>
<div class="t" style="left:531.00px;top:554px;font-size:14.40px;line-height:16px;color:#000;transform:scaleX(0.9360);">MD</div>
<div class="t" style="left:582.00px;top:554px;font-size:14.40px;line-height:16px;color:#000;transform:scaleX(1.0270);">22020</div>
<div class="t" style="left:642.00px;top:554px;font-size:14.40px;line-height:16px;color:#000;transform:scaleX(1.0021);">202-555-0881</div>
<div class="t" style="left:28.00px;top:575px;font-size:14.40px;line-height:16px;color:#000;transform:scaleX(1.0070);">Kathy</div>
<div class="t" style="left:109.00px;top:575px;font-size:14.40px;line-height:16px;color:#000;transform:scaleX(1.0119);">Howard</div>
<div class="t" style="left:227.00px;top:575px;font-size:14.40px;line-height:16px;color:#000;">1231 E 61st Street</div>
<div class="t" style="left:420.00px;top:575px;font-size:14.40px;line-height:16px;color:#000;transform:scaleX(1.0270);">Indianapolis</div>
<div class="t" style="left:531.00px;top:575px;font-size:14.40px;line-height:16px;color:#000;transform:scaleX(0.9360);">IN</div>
<div class="t" style="left:582.00px;top:575px;font-size:14.40px;line-height:16px;color:#000;transform:scaleX(1.0270);">16220</div>
<div class="t" style="left:642.00px;top:575px;font-size:14.40px;line-height:16px;color:#000;transform:scaleX(1.0021);">317-555-4344</div>
<div class="t" style="left:28.00px;top:596px;font-size:14.40px;line-height:16px;color:#000;transform:scaleX(0.9942);">Dan</div>
<div class="t" style="left:109.00px;top:596px;font-size:14.40px;line-height:16px;color:#000;transform:scaleX(1.0030);">Cage</div>
<div class="t" style="left:227.00px;top:596px;font-size:14.40px;line-height:16px;color:#000;transform:scaleX(0.9966);">6553 Berkridge Dr.</div>
<div class="t" style="left:420.00px;top:596px;font-size:14.40px;line-height:16px;color:#000;transform:scaleX(1.0180);">Hazelwood</div>
<div class="t" style="left:531.00px;top:596px;font-size:14.40px;line-height:16px;color:#000;transform:scaleX(0.9360);">MO</div>
<div class="t" style="left:582.00px;top:596px;font-size:14.40px;line-height:16px;color:#000;transform:scaleX(1.0270);">63042</div>
<div class="t" style="left:642.00px;top:596px;font-size:14.40px;line-height:16px;color:#000;transform:scaleX(1.0021);">314-555-0987</div>
<div class="t" style="left:28.00px;top:617px;font-size:14.40px;line-height:16px;color:#000;">Barb</div>
<div class="t" style="left:109.00px;top:617px;font-size:14.40px;line-height:16px;color:#000;transform:scaleX(1.0031);">McConcklin</div>
<div class="t" style="left:227.00px;top:617px;font-size:14.40px;line-height:16px;color:#000;">116 Sabre Drive</div>
<div class="t" style="left:420.00px;top:617px;font-size:14.40px;line-height:16px;color:#000;transform:scaleX(1.0162);">Williamsburg</div>
<div class="t" style="left:531.00px;top:617px;font-size:14.40px;line-height:16px;color:#000;transform:scaleX(0.9360);">VA</div>
<div class="t" style="left:582.00px;top:617px;font-size:14.40px;line-height:16px;color:#000;transform:scaleX(1.0270);">23185</div>
<div class="t" style="left:642.00px;top:617px;font-size:14.40px;line-height:16px;color:#000;transform:scaleX(1.0021);">703-555-9811</div>
<div class="t" style="left:28.00px;top:638px;font-size:14.40px;line-height:16px;color:#000;transform:scaleX(0.9960);">Mark</div>
<div class="t" style="left:109.00px;top:638px;font-size:14.40px;line-height:16px;color:#000;transform:scaleX(0.9957);">McCalley</div>
<div class="t" style="left:227.00px;top:638px;font-size:14.40px;line-height:16px;color:#000;transform:scaleX(1.0151);">6335 Burlington</div>
<div class="t" style="left:420.00px;top:638px;font-size:14.40px;line-height:16px;color:#000;transform:scaleX(1.0270);">Indianapolis</div>
<div class="t" style="left:531.00px;top:638px;font-size:14.40px;line-height:16px;color:#000;transform:scaleX(0.9360);">IN</div>
<div class="t" style="left:582.00px;top:638px;font-size:14.40px;line-height:16px;color:#000;transform:scaleX(1.0270);">46220</div>
<div class="t" style="left:642.00px;top:638px;font-size:14.40px;line-height:16px;color:#000;transform:scaleX(1.0021);">317-555-3118</div>
<div class="t" style="left:28.00px;top:659px;font-size:14.40px;line-height:16px;color:#000;transform:scaleX(1.0023);">Chris</div>
<div class="t" style="left:109.00px;top:659px;font-size:14.40px;line-height:16px;color:#000;transform:scaleX(1.0145);">Scmutte</div>
<div class="t" style="left:227.00px;top:659px;font-size:14.40px;line-height:16px;color:#000;transform:scaleX(1.0054);">5612 Arabina Court</div>
<div class="t" style="left:420.00px;top:659px;font-size:14.40px;line-height:16px;color:#000;transform:scaleX(1.0270);">Indianapolis</div>
<div class="t" style="left:531.00px;top:659px;font-size:14.40px;line-height:16px;color:#000;transform:scaleX(0.9360);">IN</div>
<div class="t" style="left:582.00px;top:659px;font-size:14.40px;line-height:16px;color:#000;transform:scaleX(1.0270);">46220</div>
<div class="t" style="left:642.00px;top:659px;font-size:14.40px;line-height:16px;color:#000;transform:scaleX(1.0021);">317-555-5209</div>
<div class="t" style="left:28.00px;top:680px;font-size:14.40px;line-height:16px;color:#000;">Pam</div>
<div class="t" style="left:109.00px;top:680px;font-size:14.40px;line-height:16px;color:#000;transform:scaleX(1.0097);">Hanley</div>
<div class="t" style="left:227.00px;top:680px;font-size:14.40px;line-height:16px;color:#000;transform:scaleX(1.0143);">5651 Evanston</div>
<div class="t" style="left:420.00px;top:680px;font-size:14.40px;line-height:16px;color:#000;transform:scaleX(1.0270);">Indianapolis</div>
<div class="t" style="left:531.00px;top:680px;font-size:14.40px;line-height:16px;color:#000;transform:scaleX(0.9360);">IN</div>
<div class="t" style="left:582.00px;top:680px;font-size:14.40px;line-height:16px;color:#000;transform:scaleX(1.0270);">46220</div>
<div class="t" style="left:642.00px;top:680px;font-size:14.40px;line-height:16px;color:#000;transform:scaleX(1.0021);">317-555-8711</div>
<div class="t" style="left:28.00px;top:701px;font-size:14.40px;line-height:16px;color:#000;transform:scaleX(1.0176);">Jerome</div>
<div class="t" style="left:109.00px;top:701px;font-size:14.40px;line-height:16px;color:#000;transform:scaleX(1.0097);">Hanley</div>
<div class="t" style="left:227.00px;top:701px;font-size:14.40px;line-height:16px;color:#000;transform:scaleX(0.9830);">36311 WCR 56</div>
<div class="t" style="left:420.00px;top:701px;font-size:14.40px;line-height:16px;color:#000;transform:scaleX(1.0075);">Eaton</div>
<div class="t" style="left:531.00px;top:701px;font-size:14.40px;line-height:16px;color:#000;transform:scaleX(0.9360);">CO</div>
<div class="t" style="left:582.00px;top:701px;font-size:14.40px;line-height:16px;color:#000;transform:scaleX(1.0270);">80615</div>
<div class="t" style="left:642.00px;top:701px;font-size:14.40px;line-height:16px;color:#000;transform:scaleX(1.0021);">303-555-7771</div>
<div class="t" style="left:28.00px;top:722px;font-size:14.40px;line-height:16px;color:#000;transform:scaleX(1.0124);">Janet</div>
<div class="t" style="left:109.00px;top:722px;font-size:14.40px;line-height:16px;color:#000;transform:scaleX(1.0155);">Eisenhut</div>
<div class="t" style="left:227.00px;top:722px;font-size:14.40px;line-height:16px;color:#000;transform:scaleX(1.0126);">455 Sheridan</div>
<div class="t" style="left:420.00px;top:722px;font-size:14.40px;line-height:16px;color:#000;transform:scaleX(1.0270);">Indianapolis</div>
<div class="t" style="left:531.00px;top:722px;font-size:14.40px;line-height:16px;color:#000;transform:scaleX(0.9360);">IN</div>
<div class="t" style="left:582.00px;top:722px;font-size:14.40px;line-height:16px;color:#000;transform:scaleX(1.0270);">46204</div>
<div class="t" style="left:642.00px;top:722px;font-size:14.40px;line-height:16px;color:#000;transform:scaleX(1.0021);">317-555-6458</div>
<div class="t" style="left:27.59px;top:785px;font-size:14.40px;line-height:16px;color:#000;transform:scaleX(1.0109);">Enter this data into your spreadsheet software. Save as</div>
<div class="t" style="left:389.65px;top:785px;font-size:14.40px;line-height:16px;color:#000;font-weight:bold;transform:scaleX(0.9622);">Address. Submit in Canvas.</div>
</body></html>
